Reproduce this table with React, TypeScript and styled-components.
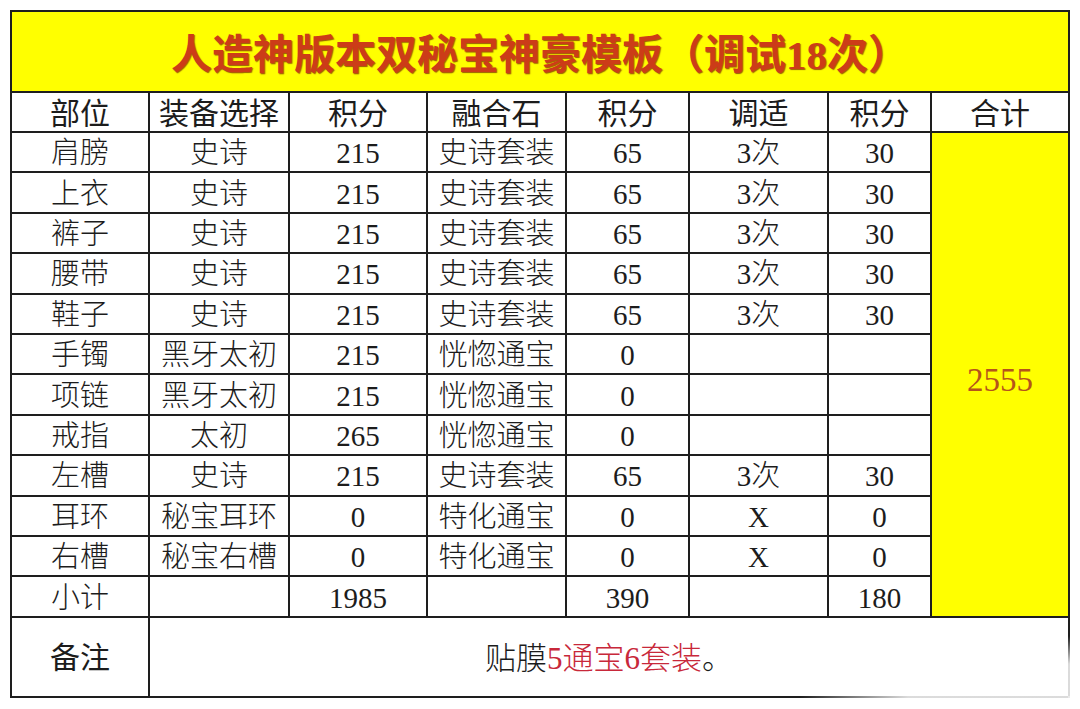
import React from "react";
import styled, { createGlobalStyle } from "styled-components";

const Global = createGlobalStyle`
  html, body { margin: 0; padding: 0; background: #ffffff; }
  body { font-family: "Liberation Serif", "Noto Sans CJK SC", serif; color: #1c1c1c; }
`;

const Sheet = styled.div`
  position: relative;
  display: grid;
  grid-template-columns: 136px 138px 136px 137px 121px 137px 101px 136px;
  grid-template-rows: 79px 38px repeat(12, 38.42px) 78px;
  gap: 2px;
  padding: 2px;
  width: max-content;
  margin: 10px 0 0 10px;
  background: #1e1e1e;

  &::before {
    content: "";
    position: absolute;
    left: 790px;
    right: 0;
    bottom: 0;
    height: 2px;
    background: linear-gradient(to right, rgba(255, 255, 255, 0), rgba(240, 240, 240, 0.9) 40%);
  }
  &::after {
    content: "";
    position: absolute;
    right: 0;
    bottom: 0;
    width: 2px;
    height: 62px;
    background: linear-gradient(to bottom, rgba(255, 255, 255, 0), rgba(235, 235, 235, 0.92) 45%);
  }
`;

const Cell = styled.div<{ $bg?: string }>`
  display: flex;
  align-items: center;
  justify-content: center;
  box-sizing: border-box;
  padding-top: 3px;
  background: ${(p) => p.$bg ?? "#ffffff"};
  font-family: "Liberation Serif", "Noto Sans CJK SC", serif;
  font-size: 29px;
  font-weight: 300;
  line-height: 1;
  white-space: nowrap;
  color: #1c1c1c;
`;

const Title = styled(Cell)`
  grid-column: 1 / -1;
  background: #ffff00;
  padding-top: 7px;
  font-family: "Liberation Serif", "Noto Sans CJK SC", serif;
  font-size: 41px;
  font-weight: 700;
  color: #cc3c18;
  text-shadow: 1px 1px 1px rgba(110, 25, 0, 0.7);
`;

const Head = styled(Cell)`
  font-weight: 400;
  font-size: 30px;
`;

const Total = styled(Cell)`
  grid-column: 8;
  grid-row: 3 / span 12;
  background: #ffff00;
  padding-top: 12px;
  color: #b5541a;
  font-size: 33px;
`;

const NoteLabel = styled(Cell)`
  font-size: 30px;
  font-weight: 400;
`;

const NoteBody = styled(Cell)`
  grid-column: 2 / -1;
  font-size: 31px;
`;

const Red = styled.span`
  color: #c8283a;
`;

const headers = ["部位", "装备选择", "积分", "融合石", "积分", "调适", "积分", "合计"];

const rows: string[][] = [
  ["肩膀", "史诗", "215", "史诗套装", "65", "3次", "30"],
  ["上衣", "史诗", "215", "史诗套装", "65", "3次", "30"],
  ["裤子", "史诗", "215", "史诗套装", "65", "3次", "30"],
  ["腰带", "史诗", "215", "史诗套装", "65", "3次", "30"],
  ["鞋子", "史诗", "215", "史诗套装", "65", "3次", "30"],
  ["手镯", "黑牙太初", "215", "恍惚通宝", "0", "", ""],
  ["项链", "黑牙太初", "215", "恍惚通宝", "0", "", ""],
  ["戒指", "太初", "265", "恍惚通宝", "0", "", ""],
  ["左槽", "史诗", "215", "史诗套装", "65", "3次", "30"],
  ["耳环", "秘宝耳环", "0", "特化通宝", "0", "X", "0"],
  ["右槽", "秘宝右槽", "0", "特化通宝", "0", "X", "0"],
  ["小计", "", "1985", "", "390", "", "180"],
];

export default function App() {
  return (
    <>
      <Global />
      <Sheet>
        <Title>人造神版本双秘宝神豪模板（调试18次）</Title>
        {headers.map((h, i) => (
          <Head key={"h" + i}>{h}</Head>
        ))}
        <Total>2555</Total>
        {rows.map((r, ri) =>
          r.map((c, ci) => <Cell key={ri + "-" + ci}>{c}</Cell>)
        )}
        <NoteLabel>备注</NoteLabel>
        <NoteBody>
          贴膜<Red>5通宝6套装</Red>。
        </NoteBody>
      </Sheet>
    </>
  );
}
